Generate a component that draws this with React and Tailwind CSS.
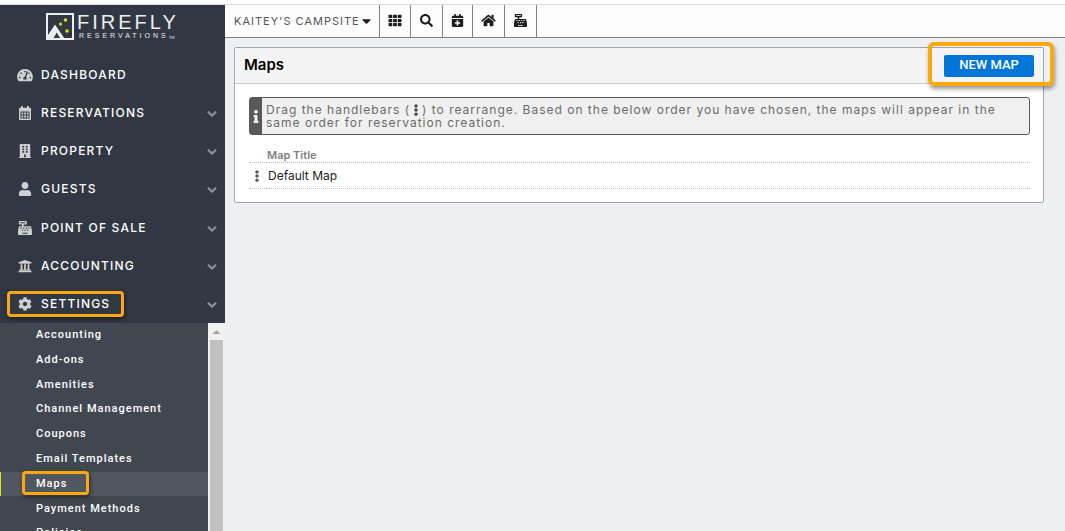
import { useState } from "react";
import {
  FaBuilding,
  FaCalendarPlus,
  FaCaretDown,
  FaCashRegister,
  FaChevronDown,
  FaCog,
  FaEllipsisV,
  FaHome,
  FaInfo,
  FaSearch,
  FaTachometerAlt,
  FaTh,
  FaUniversity,
  FaUser,
} from "react-icons/fa";

function CalendarIcon({ className }) {
  return (
    <svg viewBox="0 0 14 14" className={className} fill="currentColor">
      <rect x="3" y="0" width="2" height="3" rx="0.5" />
      <rect x="9" y="0" width="2" height="3" rx="0.5" />
      <path
        fillRule="evenodd"
        d="M2 1.8H12Q13 1.8 13 2.8V13Q13 14 12 14H2Q1 14 1 13V2.8Q1 1.8 2 1.8ZM2.5 5.5V12.5H11.5V5.5Z"
      />
      <path d="M3.4 6.5h1.9v2H3.4zM6.1 6.5H8v2H6.1zM8.8 6.5h1.9v2H8.8zM3.4 9.5h1.9v2H3.4zM6.1 9.5H8v2H6.1zM8.8 9.5h1.9v2H8.8z" />
    </svg>
  );
}

const menu = [
  { label: "DASHBOARD", icon: FaTachometerAlt },
  { label: "RESERVATIONS", icon: CalendarIcon, expandable: true },
  { label: "PROPERTY", icon: FaBuilding, expandable: true },
  { label: "GUESTS", icon: FaUser, expandable: true },
  { label: "POINT OF SALE", icon: FaCashRegister, expandable: true },
  { label: "ACCOUNTING", icon: FaUniversity, expandable: true },
  { label: "SETTINGS", icon: FaCog, expandable: true, marked: true },
];

const settingsPages = [
  "Accounting",
  "Add-ons",
  "Amenities",
  "Channel Management",
  "Coupons",
  "Email Templates",
  "Maps",
  "Payment Methods",
  "Policies",
];

const shortcuts = [
  { label: "Grid", icon: FaTh, size: "w-[14px]" },
  { label: "Search", icon: FaSearch, size: "w-[15px]" },
  { label: "New reservation", icon: FaCalendarPlus, size: "w-[13px]" },
  { label: "Home", icon: FaHome, size: "w-[15px]" },
  { label: "Register", icon: FaCashRegister, size: "w-[15px]" },
];

function Logo() {
  return (
    <a href="#" className="flex h-[51px] items-start gap-[3px] pt-2 pl-[46px] text-[#eceeef]">
      <svg viewBox="0 0 28 27" className="h-[27px] w-[28px] shrink-0">
        <rect x="1" y="1" width="26" height="25" fill="none" stroke="currentColor" strokeWidth="2" />
        <path d="M1 26V23.5L9 11.5L18.5 25.5Z" fill="currentColor" />
        <path d="M7.5 25L10.8 19.5L14 25Z" fill="#313844" />
        <circle cx="14.5" cy="11" r="1.6" fill="#e8e21a" />
        <circle cx="19.5" cy="7" r="1.7" fill="#e8e21a" />
        <circle cx="21" cy="18" r="1.7" fill="#e8e21a" />
      </svg>
      <span className="flex flex-col font-['Liberation_Sans']">
        <span className="text-[20px] leading-[18px] tracking-[3px]">FIREFLY</span>
        <span className="flex items-end pl-[2px] text-[7px] leading-[9px] tracking-[3px]">
          RESERVATIONS
          <span className="text-[4px] leading-[4px] tracking-normal">TM</span>
        </span>
      </span>
    </a>
  );
}

function Sidebar({ page, setPage }) {
  return (
    <aside className="flex w-[225px] shrink-0 flex-col bg-[#313844] text-white">
      <Logo />

      <nav className="flex h-[267px] shrink-0 flex-col">
        {menu.map(({ label, icon: Icon, expandable, marked }) => (
          <button
            key={label}
            className="relative flex flex-1 items-center pr-2 pl-[17px] text-[12px] font-medium tracking-widest"
          >
            <Icon className="mr-2 h-[14px] w-[16px] text-[#cfcfcf]" />
            {label}
            {expandable && (
              <FaChevronDown
                className="mt-[2px] ml-auto h-[10px] w-[10px] text-[#8d929a]"
                stroke="currentColor"
                strokeWidth="40"
              />
            )}
            {marked && (
              <span className="absolute top-[6px] left-[7px] h-[26px] w-[117px] rounded-[4px] border-3 border-[#f9a90c] shadow-[1px_2px_4px_rgba(0,0,0,0.5)]" />
            )}
          </button>
        ))}
      </nav>

      <div className="flex min-h-0 flex-1 overflow-hidden bg-[#404751]">
        <ul className="flex h-[223px] flex-1 flex-col">
          {settingsPages.map((name) => (
            <li key={name} className="flex flex-1">
              <button
                onClick={() => setPage(name)}
                className={`relative flex w-full items-center border-l pl-[35px] font-['Roboto'] text-[11px] font-medium tracking-[1px] ${
                  page === name
                    ? "border-[#e8e21a] bg-[#505761]"
                    : "border-transparent"
                }`}
              >
                {name}
                {name === "Maps" && (
                  <span className="absolute -top-px left-[21px] h-6 w-[67px] rounded-[4px] border-3 border-[#f9a90c] shadow-[1px_2px_4px_rgba(0,0,0,0.5)]" />
                )}
              </button>
            </li>
          ))}
        </ul>

        <div className="flex w-[17px] flex-col items-center bg-[#f1f1f1]">
          <svg viewBox="0 0 17 17" className="h-[17px] w-[17px]">
            <path d="M4.5 11L8.5 7L12.5 11Z" fill="#a3a3a3" />
          </svg>
          <div className="w-[13px] flex-1 bg-[#c1c1c1]" />
        </div>
      </div>
    </aside>
  );
}

function Topbar() {
  return (
    <header className="flex h-[33px] border-b border-[#808080] bg-[#fdfdfd]">
      <button className="flex w-[155px] items-center gap-[2px] border-r border-[#808080] pl-[9px] text-[11px] tracking-[1px] text-[#555]">
        KAITEY'S CAMPSITE
        <FaCaretDown className="h-[14px] w-[9px] text-[#1d1d1d]" />
      </button>
      {shortcuts.map(({ label, icon: Icon, size }) => (
        <button
          key={label}
          aria-label={label}
          className="flex items-center border-r border-[#808080] px-2 pb-[2px] text-[#1d1d1d]"
        >
          <Icon className={`h-[13px] ${size}`} />
        </button>
      ))}
    </header>
  );
}

function MapsPanel() {
  return (
    <section className="mt-[9px] mr-[21px] ml-[9px] rounded-[2px] border border-[#a5a6aa] bg-white">
      <div className="flex h-9 items-center justify-between border-b border-[#c8c8c8] bg-[#f4f4f4] px-[9px]">
        <h1 className="text-[15px] font-semibold text-black">Maps</h1>
        <div className="relative">
          <button className="block h-[22px] w-[90px] rounded-[2px] bg-[#0275d8] pb-[2px] font-['Roboto'] text-[13px] font-medium text-white">
            NEW MAP
          </button>
          <span className="absolute -top-[13px] -left-4 h-[44px] w-[126px] rounded-[6px] border-4 border-[#f9a90c] shadow-[1px_3px_4px_rgba(0,0,0,0.4)]" />
        </div>
      </div>

      <div className="p-[13px] pl-[14px]">
        <div className="flex rounded-[3px] border border-[#58595b] bg-[#f0f0f0]">
          <div className="flex w-3 shrink-0 items-center justify-center bg-[#58595b]">
            <FaInfo className="h-[13px] w-[8px] text-white" />
          </div>
          <p className="px-1 py-[5px] text-[12px] leading-[13px] tracking-[1px] text-[#6b6b6b]">
            Drag the handlebars (
            <FaEllipsisV className="mx-[2px] inline h-3 w-2 align-[-2px] text-[#444]" />)
            to rearrange. Based on the below order you have chosen, the maps
            will appear in the same order for reservation creation.
          </p>
        </div>

        <table className="mt-3 w-full border-collapse text-left">
          <thead>
            <tr className="h-[15px] border-b border-dotted border-[#bdbdbd]">
              <th className="w-[18px] p-0" />
              <th className="p-0 pt-px text-[11px] leading-[14px] font-semibold text-[#808080]">
                Map Title
              </th>
            </tr>
          </thead>
          <tbody>
            <tr className="h-[26px] border-b border-dotted border-[#bdbdbd]">
              <td className="p-0 pl-1">
                <FaEllipsisV className="h-3 w-2 text-[#58595b]" />
              </td>
              <td className="p-0 pt-px pl-px text-[12px] leading-4 text-[#222]">
                Default Map
              </td>
            </tr>
          </tbody>
        </table>
      </div>
    </section>
  );
}

function App() {
  const [page, setPage] = useState("Maps");

  return (
    <div className="flex h-screen flex-col overflow-hidden border-t-4 border-white bg-[#eeeff1] font-['Inter',sans-serif]">
      <div className="flex min-h-0 flex-1 border-t border-[#dcdcdc]">
        <Sidebar page={page} setPage={setPage} />
        <main className="min-w-0 flex-1">
          <Topbar />
          <MapsPanel />
        </main>
      </div>
    </div>
  );
}

export default App;
